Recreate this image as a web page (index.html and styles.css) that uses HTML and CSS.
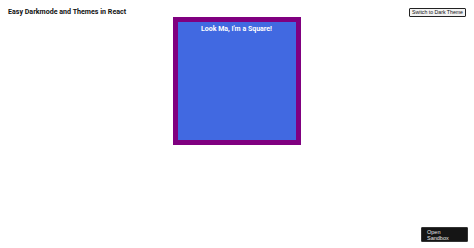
FILE: index.html
```html
<!DOCTYPE html>
<html>
<head>
<meta charset="utf-8">
<link rel="stylesheet" href="styles.css">
</head>
<body>
<div class="app">
  <header class="header">
    <h1 class="title">Easy Darkmode and Themes in React</h1>
    <button class="toggle">Switch to Dark Theme</button>
  </header>
  <main class="main">
    <div class="square">
      <h2 class="square-text">Look Ma, I'm a Square!</h2>
    </div>
  </main>
</div>
<a class="sandbox">Open<br>Sandbox</a>
</body>
</html>
```

FILE: styles.css
```css
html, body {
  margin: 0;
  padding: 0;
  background: #ffffff;
  font-family: Roboto, "Liberation Sans", sans-serif;
}
.app {
  display: flex;
  flex-direction: column;
}
.header {
  display: flex;
  justify-content: space-between;
  align-items: center;
  padding: 7px 8px 0 8px;
  height: 10px;
}
.title {
  margin: 0;
  font-size: 7.1px;
  font-weight: 700;
  color: #111;
  line-height: 10px;
}
.toggle {
  margin: 0;
  padding: 0 2px;
  height: 9px;
  font-family: "Liberation Sans", Arial, sans-serif;
  font-size: 5.2px;
  line-height: 7px;
  background: #f4f4f4;
  color: #111;
  border: 1px solid #222;
  border-radius: 1px;
}
.main {
  display: flex;
  justify-content: center;
}
.square {
  box-sizing: border-box;
  width: 128px;
  height: 128px;
  border: 5px solid #800080;
  background: #4169e1;
  display: flex;
  flex-direction: column;
  align-items: center;
  margin-left: -1px;
}
.square-text {
  margin: 2px 0 0 0;
  font-size: 7px;
  font-weight: 700;
  color: #ffffff;
  line-height: 10px;
}
.sandbox {
  position: fixed;
  right: 6px;
  bottom: 6px;
  box-sizing: border-box;
  width: 47px;
  height: 15px;
  padding: 1px 5px;
  background: #151515;
  border: 1px solid #333;
  border-radius: 1px;
  color: #e8e8e8;
  font-family: "Liberation Sans", Arial, sans-serif;
  font-size: 5.5px;
  line-height: 6px;
}
```
